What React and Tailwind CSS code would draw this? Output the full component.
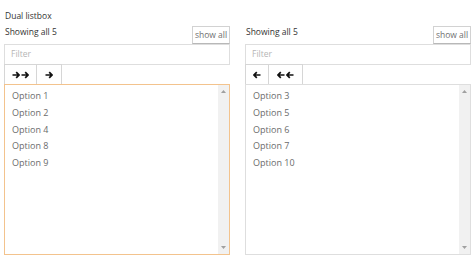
import React from "react";

function Arrow({ dir = "right" }) {
  return (
    <svg width="8" height="8" viewBox="0 0 8 8" className={dir === "left" ? "rotate-180" : ""}>
      <path d="M0.5 4H7M4.2 1.1L7 4L4.2 6.9" fill="none" stroke="#111" strokeWidth="1.7" />
    </svg>
  );
}

function DoubleArrow({ dir }) {
  return (
    <span className="flex gap-[1px]">
      <Arrow dir={dir} />
      <Arrow dir={dir} />
    </span>
  );
}

function Scrollbar() {
  return (
    <div className="w-[11px] bg-[#f1f1f1] flex flex-col justify-between items-center py-[5px]">
      <svg width="5" height="3" viewBox="0 0 5 3"><path d="M0 3L2.5 0L5 3Z" fill="#a0a0a0" /></svg>
      <svg width="5" height="3" viewBox="0 0 5 3"><path d="M0 0L2.5 3L5 0Z" fill="#a0a0a0" /></svg>
    </div>
  );
}

function Panel({ options, left }) {
  return (
    <div className="w-[226px] flex flex-col">
      <div className="flex justify-between items-start h-[18px]">
        <span className="leading-[12px] pl-[1px] text-[#333]">Showing all 5</span>
        <button className="w-[38px] h-[18px] border border-[#d2d2d2] border-b-[#b8b8b8] bg-white text-[#707070] leading-none flex items-center justify-center">
          show all
        </button>
      </div>
      <div className="h-[21px] border border-[#dedede] px-[6px] flex items-center text-[#b5b5b5]">Filter</div>
      <div className="flex h-[21px] -mt-px">
        {left ? (
          <>
            <button className="w-[33px] h-[21px] border border-[#d6d6d6] bg-white flex items-center justify-center"><DoubleArrow dir="right" /></button>
            <button className="w-[25px] h-[21px] border border-[#d6d6d6] border-l-0 bg-white flex items-center justify-center"><Arrow dir="right" /></button>
          </>
        ) : (
          <>
            <button className="w-[24px] h-[21px] border border-[#d6d6d6] bg-white flex items-center justify-center"><Arrow dir="left" /></button>
            <button className="w-[34px] h-[21px] border border-[#d6d6d6] border-l-0 bg-white flex items-center justify-center"><DoubleArrow dir="left" /></button>
          </>
        )}
      </div>
      <div className={`h-[171px] -mt-px border flex ${left ? "border-[#f3c38d]" : "border-[#dedede]"}`}>
        <div className="flex-1 pt-[3px] pl-[7px] text-[#6b6b6b] text-[9px]">
          {options.map((o) => (
            <div key={o} className="leading-[16.75px]">{o}</div>
          ))}
        </div>
        <Scrollbar />
      </div>
    </div>
  );
}

export default function App() {
  return (
    <div className="w-[474px] h-[266px] bg-white pl-[4px] pt-[10px] font-['Open_Sans',sans-serif] text-[8.5px] text-[#333]">
      <div className="leading-[12px] h-[12px] pl-[1px]">Dual listbox</div>
      <div className="mt-[4px] flex gap-[15px]">
        <Panel left options={["Option 1", "Option 2", "Option 4", "Option 8", "Option 9"]} />
        <Panel options={["Option 3", "Option 5", "Option 6", "Option 7", "Option 10"]} />
      </div>
    </div>
  );
}
